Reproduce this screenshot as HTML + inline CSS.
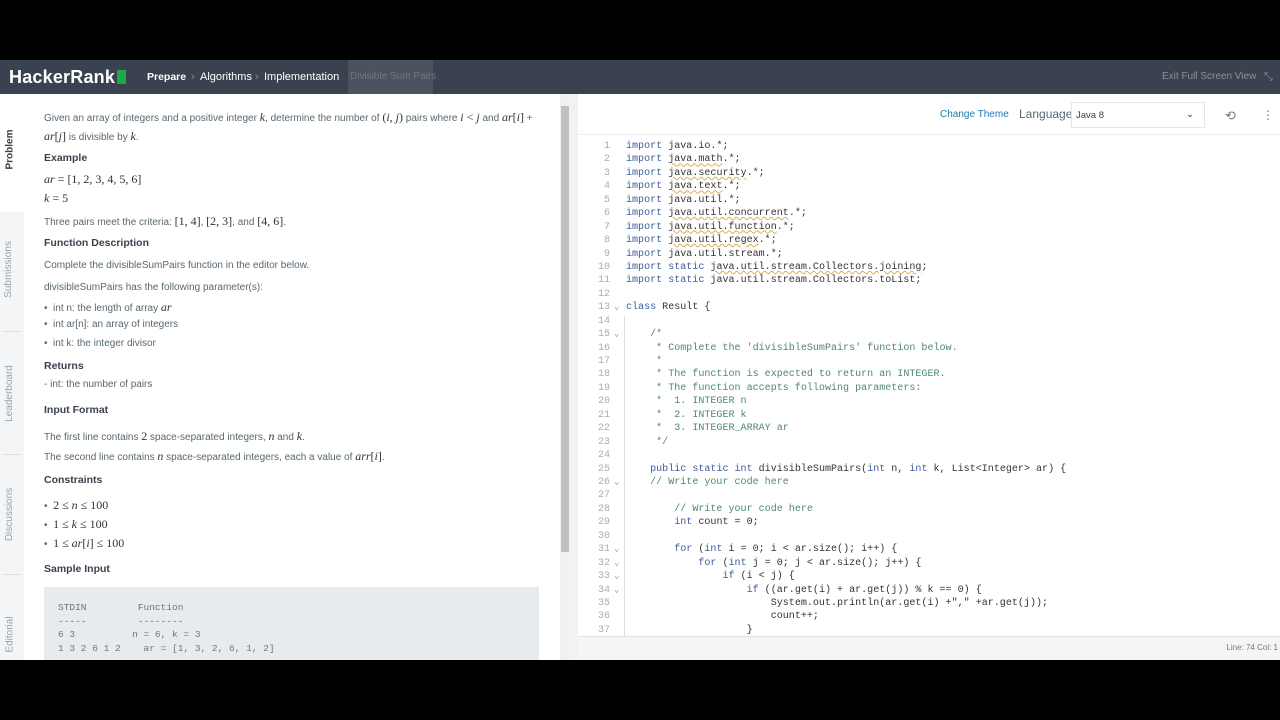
<!DOCTYPE html>
<html><head><meta charset="utf-8"><style>
*{margin:0;padding:0;box-sizing:border-box}
body{width:1280px;height:720px;background:#000;position:relative;overflow:hidden;font-family:"Liberation Sans",sans-serif}
.hdr{position:absolute;top:60px;left:0;width:1280px;height:34px;background:#39424e}
.logo{position:absolute;left:9px;top:7px;color:#fff;font-weight:bold;font-size:18px;letter-spacing:0.2px}
.logo i{display:inline-block;width:9px;height:14px;background:#1ba94c;margin-left:2px;vertical-align:-1px}
.bc{position:absolute;top:11px;font-size:11px;color:#fff}
.main{position:absolute;top:94px;left:0;width:1280px;height:566px;background:#fff}
.tabs{position:absolute;left:0;top:0;width:24px;height:566px;background:#f3f5f6}
.rot{position:absolute;transform:rotate(-90deg);white-space:nowrap;font-size:10px;color:#9aa3ab}
.left{position:absolute;left:44px;top:0;width:500px;font-size:10px;color:#576871}
.left p{position:absolute;white-space:nowrap}
.h{font-weight:bold;color:#39424e;font-size:10.5px}
.m{font-family:"Liberation Serif",serif;font-size:12px;color:#333}
.pre{position:absolute;left:44px;top:493px;width:495px;height:73px;background:#e7ebee;font-family:"Liberation Mono",monospace;font-size:9.5px;color:#6b7780;padding:14px 14px;line-height:13.5px;white-space:pre}
.sb{position:absolute;left:560px;top:0;width:10px;height:566px;background:#f1f1f1}
.div{position:absolute;left:570px;top:0;width:8px;height:566px;background:#f0f2f3}
.ed{position:absolute;left:578px;top:0;width:702px;height:566px;background:#fff}
.code{position:absolute;left:0;top:46px;width:702px;font-family:"Liberation Mono",monospace;font-size:10.05px;line-height:13.44px;color:#333}
.ln{position:absolute;left:0;width:32px;text-align:right;color:#aab;}
.cl{position:absolute;left:48px;white-space:pre}
.k{color:#3c5d9c}.c{color:#4e8a6b}.u{text-decoration:underline wavy #d8b04c;text-decoration-thickness:1px}
.fold{position:absolute;left:36px;color:#999;font-size:9px}
.status{position:absolute;left:0;top:542px;width:702px;height:24px;background:#f3f5f6;border-top:1px solid #e0e4e7;font-size:8px;color:#777}
</style></head><body>
<div class="hdr">
<div class="logo">HackerRank<i></i></div>
<div class="bc" style="left:147px;font-weight:bold;font-size:10.5px">Prepare</div>
<div class="bc" style="left:191px;color:#8a939c">›</div>
<div class="bc" style="left:200px">Algorithms</div>
<div class="bc" style="left:255px;color:#8a939c">›</div>
<div class="bc" style="left:264px">Implementation</div>
<div style="position:absolute;left:348px;top:0;width:85px;height:34px;background:#4a535f"></div>
<div class="bc" style="left:350px;color:#6d7882;font-size:10px">Divisible Sum Pairs</div>
<div class="bc" style="left:1162px;color:#8a939c;font-size:10px">Exit Full Screen View</div>
<div class="bc" style="left:1264px;color:#8a939c">⤡</div>
</div>
<div class="main">
<div class="tabs">
<div style="position:absolute;left:0;top:0;width:24px;height:118px;background:#fff"></div>
<div class="rot" style="left:-10px;top:50px;color:#39424e;font-weight:bold;font-size:10px">Problem</div>
<div class="rot" style="left:-20px;top:170px">Submissions</div>
<div style="position:absolute;left:3px;top:237px;width:18px;height:1px;background:#ddd"></div>
<div class="rot" style="left:-19px;top:294px">Leaderboard</div>
<div style="position:absolute;left:3px;top:360px;width:18px;height:1px;background:#ddd"></div>
<div class="rot" style="left:-17px;top:415px">Discussions</div>
<div style="position:absolute;left:3px;top:480px;width:18px;height:1px;background:#ddd"></div>
<div class="rot" style="left:-8px;top:535px">Editorial</div>
</div>
<div class="left">
<p style="top:16px">Given an array of integers and a positive integer <span class="m"><i>k</i></span>, determine the number of <span class="m">(<i>i</i>, <i>j</i>)</span> pairs where <span class="m"><i>i</i> &lt; <i>j</i></span> and <span class="m"><i>ar</i>[<i>i</i>]</span> +</p>
<p style="top:35px"><span class="m"><i>ar</i>[<i>j</i>]</span> is divisible by <span class="m"><i>k</i></span>.</p>
<p class="h" style="top:58px">Example</p>
<p class="m" style="top:78px"><i>ar</i> = [1, 2, 3, 4, 5, 6]</p>
<p class="m" style="top:97px"><i>k</i> = 5</p>
<p style="top:120px">Three pairs meet the criteria: <span class="m">[1, 4]</span>, <span class="m">[2, 3]</span>, and <span class="m">[4, 6]</span>.</p>
<p class="h" style="top:143px">Function Description</p>
<p style="top:166px">Complete the divisibleSumPairs function in the editor below.</p>
<p style="top:188px">divisibleSumPairs has the following parameter(s):</p>
<p style="top:206px">•&nbsp; int n: the length of array <span class="m"><i>ar</i></span></p>
<p style="top:225px">•&nbsp; int ar[n]: an array of integers</p>
<p style="top:244px">•&nbsp; int k: the integer divisor</p>
<p class="h" style="top:266px">Returns</p>
<p style="top:285px">- int: the number of pairs</p>
<p class="h" style="top:310px">Input Format</p>
<p style="top:335px">The first line contains <span class="m">2</span> space-separated integers, <span class="m"><i>n</i></span> and <span class="m"><i>k</i></span>.</p>
<p style="top:355px">The second line contains <span class="m"><i>n</i></span> space-separated integers, each a value of <span class="m"><i>arr</i>[<i>i</i>]</span>.</p>
<p class="h" style="top:380px">Constraints</p>
<p style="top:404px">•&nbsp; <span class="m">2 ≤ <i>n</i> ≤ 100</span></p>
<p style="top:423px">•&nbsp; <span class="m">1 ≤ <i>k</i> ≤ 100</span></p>
<p style="top:442px">•&nbsp; <span class="m">1 ≤ <i>ar</i>[<i>i</i>] ≤ 100</span></p>
<p class="h" style="top:469px">Sample Input</p>
</div>
<div class="pre">STDIN         Function
-----         --------
6 3          n = 6, k = 3
1 3 2 6 1 2    ar = [1, 3, 2, 6, 1, 2]</div>
<div class="sb"><div style="position:absolute;left:1px;top:12px;width:8px;height:446px;background:#c1c1c1"></div></div>
<div class="div"></div>
<div class="ed">
<div style="position:absolute;left:362px;top:15px;font-size:10px;color:#1b7bb5">Change Theme</div>
<div style="position:absolute;left:441px;top:13px;font-size:12px;color:#576871">Language</div>
<div style="position:absolute;left:493px;top:8px;width:134px;height:26px;border:1px solid #e5e8ea;font-size:9.5px;color:#39424e;padding:7px 4px">Java 8<span style="position:absolute;right:10px;top:6px">⌄</span></div>
<div style="position:absolute;left:647px;top:14px;font-size:13px;color:#777">⟲</div>
<div style="position:absolute;left:684px;top:14px;font-size:12px;color:#777">⋮</div>
<div style="position:absolute;left:0;top:40px;width:702px;height:1px;background:#eceef0"></div>
<div class="code">
<div class="ln" style="top:0">1</div><div class="cl" style="top:0"><span class="k">import</span> java.io.*;</div>
<div class="ln" style="top:13.44px">2</div><div class="cl" style="top:13.44px"><span class="k">import</span> <span class="u">java.math</span>.*;</div>
<div class="ln" style="top:26.88px">3</div><div class="cl" style="top:26.88px"><span class="k">import</span> <span class="u">java.security</span>.*;</div>
<div class="ln" style="top:40.32px">4</div><div class="cl" style="top:40.32px"><span class="k">import</span> <span class="u">java.text</span>.*;</div>
<div class="ln" style="top:53.76px">5</div><div class="cl" style="top:53.76px"><span class="k">import</span> java.util.*;</div>
<div class="ln" style="top:67.2px">6</div><div class="cl" style="top:67.2px"><span class="k">import</span> <span class="u">java.util.concurrent</span>.*;</div>
<div class="ln" style="top:80.64px">7</div><div class="cl" style="top:80.64px"><span class="k">import</span> <span class="u">java.util.function</span>.*;</div>
<div class="ln" style="top:94.08px">8</div><div class="cl" style="top:94.08px"><span class="k">import</span> <span class="u">java.util.regex</span>.*;</div>
<div class="ln" style="top:107.52px">9</div><div class="cl" style="top:107.52px"><span class="k">import</span> java.util.stream.*;</div>
<div class="ln" style="top:120.96px">10</div><div class="cl" style="top:120.96px"><span class="k">import static</span> <span class="u">java.util.stream.Collectors.joining</span>;</div>
<div class="ln" style="top:134.4px">11</div><div class="cl" style="top:134.4px"><span class="k">import static</span> java.util.stream.Collectors.toList;</div>
<div class="ln" style="top:147.84px">12</div>
<div class="ln" style="top:161.28px">13</div><div class="fold" style="top:161.28px">⌄</div><div class="cl" style="top:161.28px"><span class="k">class</span> Result {</div>
<div class="ln" style="top:174.72px">14</div>
<div class="ln" style="top:188.16px">15</div><div class="fold" style="top:188.16px">⌄</div><div class="cl c" style="top:188.16px">    /*</div>
<div class="ln" style="top:201.6px">16</div><div class="cl c" style="top:201.6px">     * Complete the 'divisibleSumPairs' function below.</div>
<div class="ln" style="top:215.04px">17</div><div class="cl c" style="top:215.04px">     *</div>
<div class="ln" style="top:228.48px">18</div><div class="cl c" style="top:228.48px">     * The function is expected to return an INTEGER.</div>
<div class="ln" style="top:241.92px">19</div><div class="cl c" style="top:241.92px">     * The function accepts following parameters:</div>
<div class="ln" style="top:255.36px">20</div><div class="cl c" style="top:255.36px">     *  1. INTEGER n</div>
<div class="ln" style="top:268.8px">21</div><div class="cl c" style="top:268.8px">     *  2. INTEGER k</div>
<div class="ln" style="top:282.24px">22</div><div class="cl c" style="top:282.24px">     *  3. INTEGER_ARRAY ar</div>
<div class="ln" style="top:295.68px">23</div><div class="cl c" style="top:295.68px">     */</div>
<div class="ln" style="top:309.12px">24</div>
<div class="ln" style="top:322.56px">25</div><div class="cl" style="top:322.56px">    <span class="k">public static int</span> divisibleSumPairs(<span class="k">int</span> n, <span class="k">int</span> k, List&lt;Integer&gt; ar) {</div>
<div class="ln" style="top:336px">26</div><div class="fold" style="top:336px">⌄</div><div class="cl c" style="top:336px">    // Write your code here</div>
<div class="ln" style="top:349.44px">27</div>
<div class="ln" style="top:362.88px">28</div><div class="cl c" style="top:362.88px">        // Write your code here</div>
<div class="ln" style="top:376.32px">29</div><div class="cl" style="top:376.32px">        <span class="k">int</span> count = 0;</div>
<div class="ln" style="top:389.76px">30</div>
<div class="ln" style="top:403.2px">31</div><div class="fold" style="top:403.2px">⌄</div><div class="cl" style="top:403.2px">        <span class="k">for</span> (<span class="k">int</span> i = 0; i &lt; ar.size(); i++) {</div>
<div class="ln" style="top:416.64px">32</div><div class="fold" style="top:416.64px">⌄</div><div class="cl" style="top:416.64px">            <span class="k">for</span> (<span class="k">int</span> j = 0; j &lt; ar.size(); j++) {</div>
<div class="ln" style="top:430.08px">33</div><div class="fold" style="top:430.08px">⌄</div><div class="cl" style="top:430.08px">                <span class="k">if</span> (i &lt; j) {</div>
<div class="ln" style="top:443.52px">34</div><div class="fold" style="top:443.52px">⌄</div><div class="cl" style="top:443.52px">                    <span class="k">if</span> ((ar.get(i) + ar.get(j)) % k == 0) {</div>
<div class="ln" style="top:456.96px">35</div><div class="cl" style="top:456.96px">                        System.out.println(ar.get(i) +"," +ar.get(j));</div>
<div class="ln" style="top:470.4px">36</div><div class="cl" style="top:470.4px">                        count++;</div>
<div class="ln" style="top:483.84px">37</div><div class="cl" style="top:483.84px">                    }</div>
</div>
<div style="position:absolute;left:46px;top:222px;width:1px;height:320px;background:#ddd"></div>
<div class="status"><span style="position:absolute;right:2px;top:6px">Line: 74 Col: 1</span></div>
</div>
</div>
</body></html>
